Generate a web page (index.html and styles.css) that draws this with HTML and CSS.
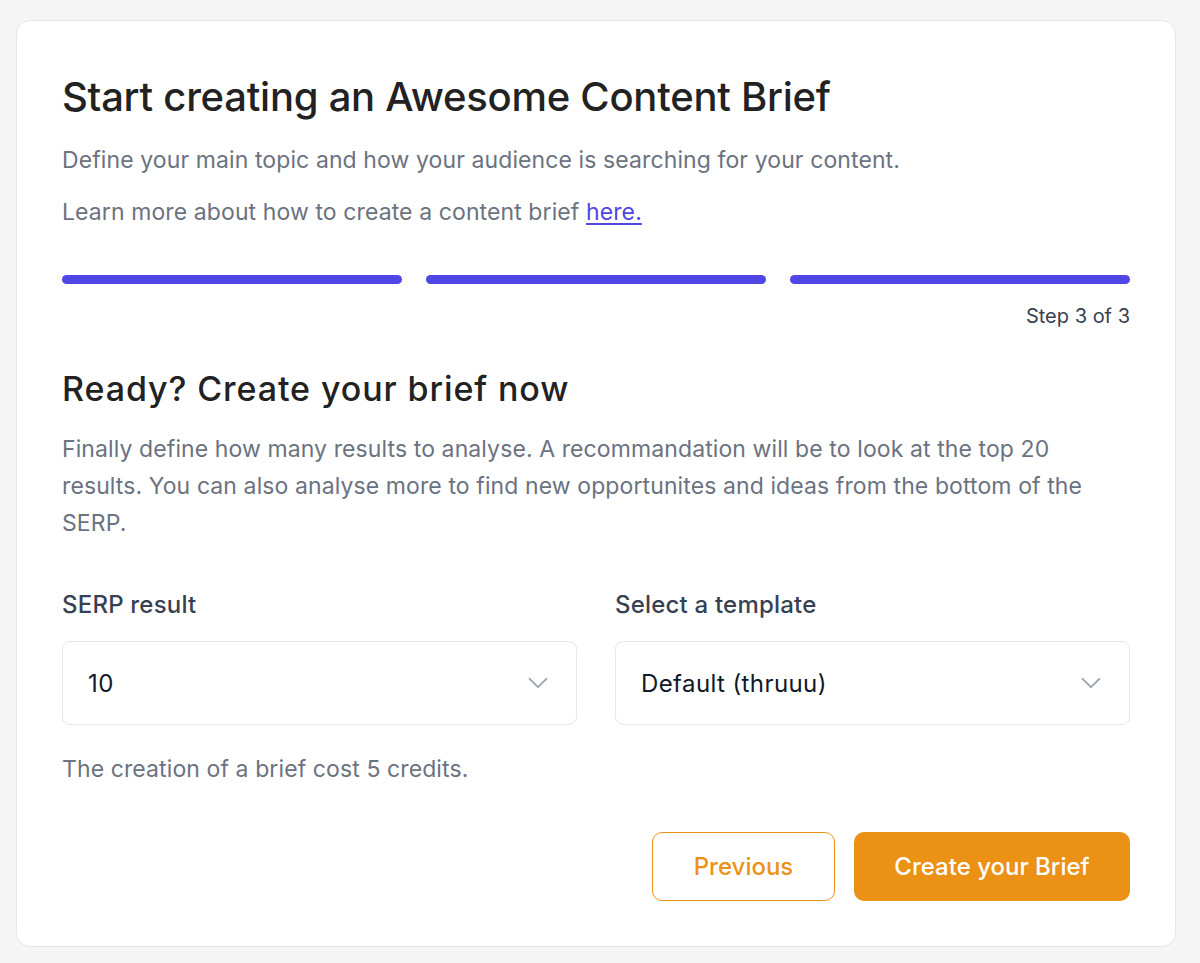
FILE: index.html
```html
<!DOCTYPE html>
<html>
<head>
<meta charset="utf-8">
<link rel="stylesheet" href="styles.css">
</head>
<body>
<div class="card">
  <h1 class="title">Start creating an Awesome Content Brief</h1>
  <p class="lead">Define your main topic and how your audience is searching for your content.</p>
  <p class="lead second">Learn more about how to create a content brief <a href="#" class="link">here.</a></p>
  <div class="steps">
    <div class="bar"></div>
    <div class="bar"></div>
    <div class="bar"></div>
  </div>
  <div class="step-label">Step 3 of 3</div>
  <h2 class="subtitle">Ready? Create your brief now</h2>
  <p class="desc">Finally define how many results to analyse. A recommandation will be to look at the top 20 results. You can also analyse more to find new opportunites and ideas from the bottom of the SERP.</p>
  <div class="fields">
    <div class="field">
      <div class="label">SERP result</div>
      <div class="select">
        <span class="value">10</span>
        <svg class="chev" width="28" height="28" viewBox="0 0 20 20" fill="none"><path d="M4 7l6 6 6-6" stroke="#9ca3af" stroke-width="1.3" stroke-linecap="round" stroke-linejoin="round"/></svg>
      </div>
    </div>
    <div class="field">
      <div class="label">Select a template</div>
      <div class="select">
        <span class="value">Default (thruuu)</span>
        <svg class="chev" width="28" height="28" viewBox="0 0 20 20" fill="none"><path d="M4 7l6 6 6-6" stroke="#9ca3af" stroke-width="1.3" stroke-linecap="round" stroke-linejoin="round"/></svg>
      </div>
    </div>
  </div>
  <p class="cost">The creation of a brief cost 5 credits.</p>
  <div class="actions">
    <button class="btn btn-outline">Previous</button>
    <button class="btn btn-primary">Create your Brief</button>
  </div>
</div>
</body>
</html>
```
FILE: styles.css
```css
* { box-sizing: border-box; }
html, body { margin: 0; padding: 0; }
body {
  background: #f5f5f5;
  font-family: Inter, "Noto Sans", sans-serif;
  padding: 20px 24px 16px 16px;
}
.card {
  background: #fff;
  border: 1px solid #e5e5e5;
  border-radius: 14px;
  padding: 52px 45px 45px 45px;
  width: 1160px;
}
.title {
  margin: 0;
  font-size: 40px;
  font-weight: 500;
  color: #222;
  line-height: 48px;
  letter-spacing: -0.25px;
}
.lead {
  margin: 24px 0 0;
  font-size: 23px;
  line-height: 30px;
  color: #6b7280;
  letter-spacing: 0.1px;
}
.lead.second { margin-top: 22px; }
.link { color: #4f46e5; text-decoration: underline; text-underline-offset: 3px; }
.steps {
  display: flex;
  gap: 24px;
  margin-top: 48px;
}
.bar {
  flex: 1;
  height: 9px;
  border-radius: 5px;
  background: #4f46e5;
}
.step-label {
  text-align: right;
  margin-top: 18px;
  font-size: 20px;
  line-height: 28px;
  color: #374151;
}
.subtitle {
  margin: 37px 0 0;
  font-size: 34px;
  font-weight: 500;
  line-height: 44px;
  color: #222;
  letter-spacing: 0.9px;
}
.desc {
  margin: 20px 0 0;
  font-size: 23px;
  line-height: 37px;
  color: #6b7280;
  letter-spacing: 0.1px;
}
.fields {
  display: grid;
  grid-template-columns: 1fr 1fr;
  gap: 38px;
  margin-top: 48px;
}
.label {
  font-size: 24px;
  font-weight: 500;
  line-height: 30px;
  color: #374151;
  letter-spacing: 0.2px;
}
.select {
  margin-top: 21px;
  height: 84px;
  border: 1px solid #e5e7eb;
  border-radius: 8px;
  display: flex;
  align-items: center;
  justify-content: space-between;
  padding: 0 24px 0 25px;
}
.value {
  font-size: 24px;
  color: #111827;
  letter-spacing: 0.4px;
}
.cost {
  margin: 29px 0 0;
  font-size: 23px;
  line-height: 30px;
  color: #6b7280;
  letter-spacing: 0.1px;
}
.actions {
  display: flex;
  justify-content: flex-end;
  gap: 19px;
  margin-top: 48px;
}
.btn {
  height: 69px;
  border-radius: 10px;
  font-family: inherit;
  font-size: 24px;
  font-weight: 500;
  cursor: pointer;
}
.btn-outline {
  width: 183px;
  background: #fff;
  border: 1.5px solid #eb9216;
  color: #eb9216;
}
.btn-primary {
  width: 276px;
  background: #eb9216;
  border: none;
  color: #fff;
}
```
